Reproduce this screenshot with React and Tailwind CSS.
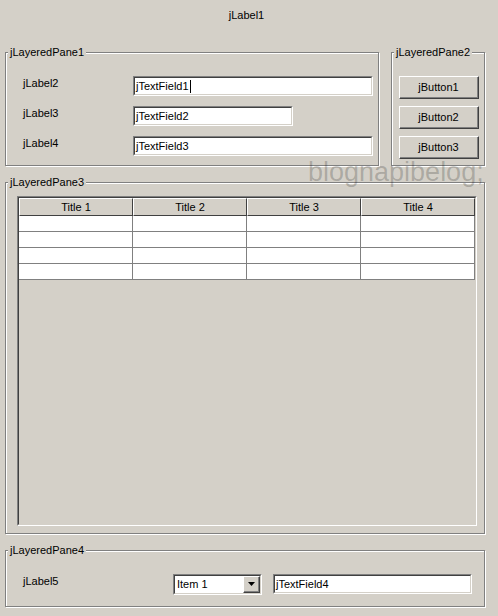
import React from 'react';

// Windows classic look: etched titled panes, sunken fields, raised buttons
function Pane({ title, className = '', children }) {
  return (
    <div className={`border border-[#808080] shadow-[inset_1px_1px_0_#fff,1px_1px_0_#fff] ${className}`}>
      <div className="-mt-[7px] ml-[2px] w-fit bg-[#d4d0c8] px-[2px] text-[11px] leading-[13px]">{title}</div>
      {children}
    </div>
  );
}

function Sunken({ className = '', inner = '', children }) {
  return (
    <div className={`border border-t-[#808080] border-l-[#808080] border-r-white border-b-white ${className}`}>
      <div className={`h-full border border-t-[#404040] border-l-[#404040] border-r-[#d4d0c8] border-b-[#d4d0c8] ${inner}`}>
        {children}
      </div>
    </div>
  );
}

function Field({ value, className, caret }) {
  return (
    <Sunken className={`h-[20px] ${className}`} inner="flex items-center bg-white pl-[1px]">
      <span className="text-[11px] leading-[13px]">{value}</span>
      {caret && <span className="ml-[1px] h-[13px] w-px bg-black" />}
    </Sunken>
  );
}

function Button({ children }) {
  return (
    <div className="h-[23px] w-[80px] border border-t-white border-l-white border-r-[#404040] border-b-[#404040]">
      <div className="flex h-full items-center justify-center border-r border-b border-r-[#808080] border-b-[#808080] text-[11px] leading-[13px]">
        {children}
      </div>
    </div>
  );
}

function Label({ children, className = '' }) {
  return <div className={`mt-[1px] self-start text-[11px] leading-[13px] ${className}`}>{children}</div>;
}

const titles = ['Title 1', 'Title 2', 'Title 3', 'Title 4'];
const rows = [0, 1, 2, 3];

export default function App() {
  return (
    <div className="relative h-[616px] w-[498px] overflow-hidden bg-[#d4d0c8] font-['Liberation_Sans',Arial,sans-serif] text-black">
      {/* top label */}
      <div className="flex h-[52px] justify-center pr-[5px] pt-[9px]">
        <span className="text-[11px] leading-[13px]">jLabel1</span>
      </div>

      {/* pane 1 + pane 2 */}
      <div className="flex">
        <Pane title="jLayeredPane1" className="ml-[5px] h-[114px] w-[374px]">
          <div className="mt-[17px] flex flex-col gap-[10px] pl-[17px]">
            <div className="flex h-[20px]">
              <Label className="w-[110px]">jLabel2</Label>
              <Field value="jTextField1" className="w-[240px]" caret />
            </div>
            <div className="flex h-[20px]">
              <Label className="w-[110px]">jLabel3</Label>
              <Field value="jTextField2" className="w-[160px]" />
            </div>
            <div className="flex h-[20px]">
              <Label className="w-[110px]">jLabel4</Label>
              <Field value="jTextField3" className="w-[240px]" />
            </div>
          </div>
        </Pane>

        <Pane title="jLayeredPane2" className="ml-[12px] h-[114px] w-[94px]">
          <div className="mt-[17px] flex flex-col gap-[7px] pl-[7px]">
            <Button>jButton1</Button>
            <Button>jButton2</Button>
            <Button>jButton3</Button>
          </div>
        </Pane>
      </div>

      {/* pane 3 with table */}
      <Pane title="jLayeredPane3" className="ml-[5px] mt-[16px] h-[352px] w-[480px]">
        <Sunken className="ml-[11px] mt-[7px] h-[330px] w-[460px]">
          <table className="w-full table-fixed border-separate border-spacing-0">
            <thead>
              <tr>
                {titles.map((t) => (
                  <th
                    key={t}
                    className="h-[18px] border border-t-white border-l-white border-r-[#404040] border-b-[#404040] p-0 text-[11px] font-normal leading-[13px]"
                  >
                    {t}
                  </th>
                ))}
              </tr>
            </thead>
            <tbody>
              {rows.map((r) => (
                <tr key={r}>
                  {titles.map((t) => (
                    <td key={t} className="h-[16px] border-r border-b border-[#808080] bg-white p-0" />
                  ))}
                </tr>
              ))}
            </tbody>
          </table>
        </Sunken>
      </Pane>

      {/* pane 4 */}
      <Pane title="jLayeredPane4" className="ml-[5px] mt-[16px] h-[57px] w-[480px]">
        <div className="mt-[17px] flex pl-[17px]">
          <Label className="w-[150px]">jLabel5</Label>
          <Sunken className="h-[21px] w-[89px]" inner="flex bg-white">
            <span className="flex flex-1 items-center pl-[2px] text-[11px] leading-[13px]">Item 1</span>
            <div className="w-[17px] border border-t-white border-l-white border-r-[#404040] border-b-[#404040] bg-[#d4d0c8]">
              <div className="flex h-full items-center justify-center border-r border-b border-r-[#808080] border-b-[#808080]">
                <svg width="7" height="4" viewBox="0 0 7 4">
                  <path d="M0 0h7L3.5 4z" fill="#000" />
                </svg>
              </div>
            </div>
          </Sunken>
          <Field value="jTextField4" className="ml-[11px] w-[199px]" />
        </div>
      </Pane>

      {/* watermark */}
      <div className="pointer-events-none absolute left-[308px] top-[159px] text-[27px] leading-none text-black/20">
        blognapibelog;
      </div>
    </div>
  );
}
